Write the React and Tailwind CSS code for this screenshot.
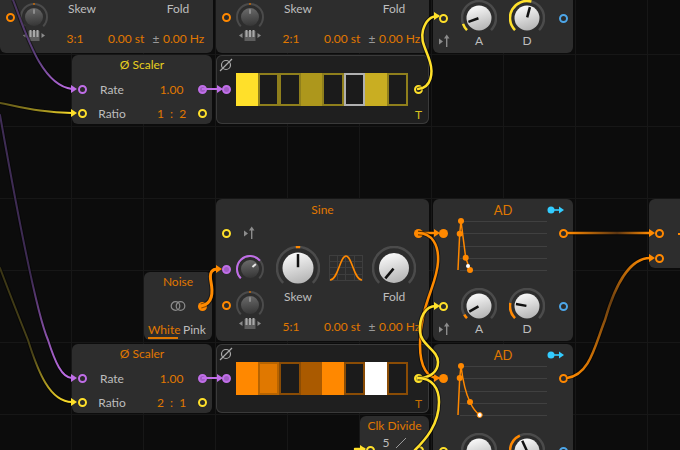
import React from 'react'

const PORTS = {
  orangeRing: 'border-2 border-[#ff8800] bg-[#2b2b2b]',
  orangeFull: 'bg-[#ff8800]',
  yellowRing: 'border-2 border-[#ffe02a] bg-[#2b2b2b]',
  yellowFull: 'border-2 border-[#ffe02a] bg-[#a09a30]',
  purple: 'border-2 border-[#c06ee8] bg-[#9f5ec2]',
  purpleRing: 'border-2 border-[#c06ee8] bg-[#2b2b2b]',
  blue: 'border-2 border-[#4da6e8] bg-[#2b2b2b]',
}

function Port({ kind }) {
  return <span className={'block w-[9px] h-[9px] rounded-full ' + PORTS[kind]} />
}

function polar(c, r, deg) {
  const a = ((deg - 90) * Math.PI) / 180
  return [c + r * Math.cos(a), c + r * Math.sin(a)]
}

function arc(c, r, from, to) {
  const [x1, y1] = polar(c, r, from)
  const [x2, y2] = polar(c, r, to)
  return `M${x1} ${y1} A${r} ${r} 0 ${to - from > 180 ? 1 : 0} 1 ${x2} ${y2}`
}

// angle 0 = straight up, range is -135..135
function Knob({ size, r, disc, angle, color, tick, dark, fill, width = 2.5 }) {
  const c = size / 2
  const [x1, y1] = polar(c, dark ? disc * 0.35 : disc * 0.05, angle)
  const [x2, y2] = polar(c, dark ? disc * 0.85 : disc * 0.9, angle)
  const t = dark ? 4 : 6
  return (
    <svg width={size} height={size} className="block shrink-0">
      <path d={arc(c, r, -135, 135)} fill="none" stroke="#4b4b4b" strokeWidth={width} />
      {color && <path d={arc(c, r, -135, angle)} fill="none" stroke={color} strokeWidth={width} />}
      {tick && <path d={arc(c, r, -t, t)} fill="none" stroke={dark ? '#b06414' : '#ff8800'} strokeWidth={width} />}
      <circle cx={c} cy={c} r={disc} fill={dark ? 'url(#discDark)' : 'url(#discLight)'} />
      <line x1={x1} y1={y1} x2={x2} y2={y2} stroke={fill || (dark ? '#8c8c8c' : '#111')} strokeWidth={dark ? 2 : 2.5} />
    </svg>
  )
}

function KeysIcon() {
  return (
    <svg width="22" height="11" className="block" fill="#8c8c8c">
      <polygon points="0,5.5 3.5,3 3.5,8" />
      <polygon points="22,5.5 18.5,3 18.5,8" />
      <rect x="5.5" y="1" width="11" height="10" fill="#5e5e5e" />
      <rect x="6.5" y="0" width="2" height="7" fill="#a8a8a8" />
      <rect x="10" y="0" width="2" height="7" fill="#a8a8a8" />
      <rect x="13.5" y="0" width="2" height="7" fill="#a8a8a8" />
    </svg>
  )
}

function TrigIcon() {
  return (
    <svg width="14" height="14" className="block" fill="#8c8c8c">
      <polygon points="1,4.5 5,7.5 1,10.5" />
      <rect x="8" y="3" width="1.4" height="10" />
      <polygon points="8.7,0.5 11.5,4.5 6,4.5" />
    </svg>
  )
}

function PhaseIcon() {
  return (
    <svg width="14" height="14" className="block" fill="none" stroke="#aaaaaa" strokeWidth="1.2">
      <circle cx="7" cy="7" r="4.5" />
      <line x1="1" y1="13" x2="13" y2="1" />
    </svg>
  )
}

function SineGraph() {
  return (
    <svg width="34" height="26" className="block" fill="none">
      <path d="M0.5 0.5H33.5M0.5 6.5H33.5M0.5 12.5H33.5M0.5 19.5H33.5M0.5 25.5H33.5M0.5 0V26M8.5 0V26M16.5 0V26M25.5 0V26M33.5 0V26" stroke="#3e3e3e" />
      <path d="M1 25 C9 25 11 1 17 1 C23 1 25 25 33 25" stroke="#ff8800" strokeWidth="1.6" />
    </svg>
  )
}

function Node({ x, y, w, h, children, className = 'bg-[#2d2d2d]' }) {
  return (
    <div
      className={'absolute rounded-[6px] text-[12px] leading-none text-[#bdbdbd] ' + className}
      style={{ left: x, top: y, width: w, height: h }}
    >
      {children}
    </div>
  )
}

function PortCell({ kind, height = 'h-9' }) {
  return (
    <div className={'flex items-center justify-center w-5 ' + height}>
      {kind && <Port kind={kind} />}
    </div>
  )
}

function Osc({ x, y, title, ratio, knob, out }) {
  return (
    <Node x={x} y={y} w={213} h={142}>
      <div className="h-4 pt-[5px] flex items-center justify-center text-[#e07800]">{title}</div>
      <div className="flex">
        <div className="w-5">
          <PortCell kind="yellowRing" />
          <PortCell kind="purple" />
          <PortCell kind="orangeRing" />
        </div>
        <div className="w-7 flex flex-col items-center">
          <div className="h-9 flex items-center"><TrigIcon /></div>
          <div className="h-9 flex items-center">{knob}</div>
          <div className="h-7 mt-1 flex items-center">
            <Knob size={28} r={13} disc={9} angle={0} dark tick width={2} />
          </div>
          <div className="-mt-px"><KeysIcon /></div>
        </div>
        <div className="pt-[14px]">
          <div className="h-[9px] ml-[150px]">{out && <Port kind={out} />}</div>
          <div className="flex items-center mt-2">
            <div className="ml-3"><Knob size={44} r={21} disc={15.5} angle={0} tick /></div>
            <div className="ml-[9px]"><SineGraph /></div>
            <div className="ml-[9px]"><Knob size={44} r={21} disc={15} angle={-140} /></div>
          </div>
          <div className="flex h-[14px] items-center">
            <div className="ml-3 w-11 text-center">Skew</div>
            <div className="ml-[52px] w-11 text-center">Fold</div>
          </div>
          <div className="flex items-center h-4 mt-[15px] text-[#e07800] whitespace-nowrap">
            <div className="ml-[18px] w-[18px] text-center">{ratio}</div>
            <div className="ml-[24px] w-[34px] text-center">0.00 st</div>
            <div className="ml-[10px] w-2 text-center text-[#9a9a9a]">±</div>
            <div className="ml-[3px]">0.00 Hz</div>
          </div>
        </div>
      </div>
    </Node>
  )
}

function EnvGraph({ line, points }) {
  return (
    <svg width="100" height="60" className="block" fill="none">
      <path d="M7 6.5H94M7 18.5H94M7 31.5H94M7 43.5H94M7 55.5H94" stroke="#404040" />
      <path d={line} stroke="#ff8800" strokeWidth="1.5" />
      {points.map((p, i) => (
        <circle key={i} cx={p[0]} cy={p[1]} r={p[2] || 3} fill={p[3] || '#ff8800'} stroke={p[4] || 'none'} />
      ))}
    </svg>
  )
}

function AD({ x, y, title, line, points, aKnob, dKnob, labels = true }) {
  return (
    <Node x={x} y={y} w={140} h={142}>
      <div className="h-4 pt-[7px] flex items-center justify-center text-[#e07800] text-[13px]">{title}</div>
      {title && (
        <svg width="18" height="10" className="absolute top-[6px] right-[8px]" fill="none">
          <circle cx="4" cy="5" r="3.5" fill="#33ccff" />
          <path d="M4 5H14" stroke="#33ccff" strokeWidth="1.6" />
          <polygon points="12,1.5 17,5 12,8.5" fill="#33ccff" />
        </svg>
      )}
      <div className="flex">
        <div className="w-5"><PortCell kind="orangeFull" /></div>
        <EnvGraph line={line} points={points} />
        <div className="w-5"><PortCell kind="orangeRing" /></div>
      </div>
      <div className="flex mt-[13px]">
        <PortCell kind="yellowRing" />
        <div className="ml-2">{aKnob}</div>
        <div className="ml-3">{dKnob}</div>
        <div className="ml-2"><PortCell kind="blue" /></div>
      </div>
      {labels && (
        <div className="flex h-[14px] items-center -mt-[2px]">
          <div className="ml-[5px]"><TrigIcon /></div>
          <div className="ml-[9px] w-9 text-center">A</div>
          <div className="ml-3 w-9 text-center">D</div>
        </div>
      )}
    </Node>
  )
}

function Scaler({ x, y, title, titleColor, ratio }) {
  return (
    <Node x={x} y={y} w={140} h={69}>
      <div className={'h-[22px] pb-[2px] flex items-center justify-center ' + titleColor}>{title}</div>
      <div className="flex items-center h-6">
        <PortCell kind="purpleRing" height="h-6" />
        <div className="w-10 pt-[2px] text-center">Rate</div>
        <div className="ml-[19px] w-[41px] pt-[2px] text-center text-[#e07800]">1.00</div>
        <PortCell kind="purple" height="h-6" />
      </div>
      <div className="flex items-center h-6">
        <PortCell kind="yellowRing" height="h-6" />
        <div className="w-10 pt-[2px] text-center">Ratio</div>
        <div className="ml-[19px] w-[41px] pt-[2px] text-center text-[#e07800] whitespace-pre">{ratio}</div>
        <PortCell kind="yellowRing" height="h-6" />
      </div>
    </Node>
  )
}

function Steps({ x, y, steps, out, tColor }) {
  return (
    <Node x={x} y={y} w={213} h={69} className="bg-[#1f1f1f] shadow-[inset_0_0_0_1px_#3a3a3a]">
      <div className="h-[18px] flex items-center pl-[3px] pt-[2px]"><PhaseIcon /></div>
      <div className="flex items-center h-[33px]">
        <PortCell kind="purple" height="h-[33px]" />
        <div className="flex w-[172px] h-[33px]">
          {steps.map((s, i) => (
            <div key={i} className={'flex-1 border-2 ' + s} />
          ))}
        </div>
        <PortCell kind={out} height="h-[33px]" />
      </div>
      <div className={'h-[16px] flex items-center justify-end pr-[7px] pt-[1px] ' + tColor}>T</div>
    </Node>
  )
}

function Wire({ d, from, to, a, b = a, fade, width = 2.5 }) {
  const id = 'w' + d.replace(/[^0-9]/g, '').slice(0, 14)
  return (
    <>
      <defs>
        <linearGradient id={id} gradientUnits="userSpaceOnUse" x1={from[0]} y1={from[1]} x2={to[0]} y2={to[1]}>
          <stop offset="0" stopColor={a} />
          <stop offset="0.6" stopColor={fade || a} />
          <stop offset="1" stopColor={b} />
        </linearGradient>
      </defs>
      <path d={d} fill="none" stroke="#000" strokeOpacity="0.45" strokeWidth={width + 2} />
      <path d={d} fill="none" stroke={`url(#${id})`} strokeWidth={width} strokeLinecap="round" />
    </>
  )
}

function Arrow({ x, y, color }) {
  return <polygon points={`${x - 6},${y - 4} ${x},${y} ${x - 6},${y + 4}`} fill={color} />
}

function Wires() {
  const P = '#c06ee8'
  const Y = '#ffe02a'
  const O = '#ff8a00'
  return (
    <svg width="680" height="450" className="absolute inset-0 z-10 pointer-events-none">
      <defs>
        <linearGradient id="discLight" x1="0.3" y1="0" x2="0.6" y2="1">
          <stop offset="0" stopColor="#fbfbfb" />
          <stop offset="1" stopColor="#b4b4b4" />
        </linearGradient>
        <linearGradient id="discDark" x1="0.4" y1="0" x2="0.5" y2="1">
          <stop offset="0" stopColor="#6a6a6a" />
          <stop offset="1" stopColor="#363636" />
        </linearGradient>
      </defs>

      <Wire d="M13 0 C25 30 40 85 72 89" from={[13, 0]} to={[72, 89]} a="#4a3560" b={P} fade="#5f4080" width={2} />
      <Arrow x={77} y={89} color={P} />
      <Wire d="M0 115 C15 200 35 310 48 340 C55 362 62 378 72 378" from={[0, 115]} to={[72, 378]} a="#3f2d55" b={P} fade="#3d2a52" width={2} />
      <Arrow x={77} y={378} color={P} />
      <Wire d="M0 103 C25 108 45 113 72 113" from={[0, 103]} to={[72, 113]} a="#5e5518" b={Y} fade="#a09020" width={2} />
      <Arrow x={77} y={113} color={Y} />
      <Wire d="M0 268 C12 300 22 325 28 340 C38 372 50 402 72 402" from={[0, 268]} to={[72, 402]} a="#3a3515" b={Y} fade="#4a4418" width={2} />
      <Arrow x={77} y={402} color={Y} />

      <path d="M202 89H220M202 378H220" stroke={P} strokeWidth="2" />
      <Arrow x={223} y={89} color={P} />
      <Arrow x={223} y={378} color={P} />

      <Wire d="M418 89 C432 88 433 72 430 62 C426 48 420 42 423 30 C426 20 432 16 438 16" from={[418, 89]} to={[438, 16]} a={Y} />
      <Arrow x={440} y={16} color={Y} />

      <Wire d="M201 306 C213 304 213 292 211 282 C209 272 212 269 218 269" from={[201, 306]} to={[218, 269]} a={O} width={3} />
      <Arrow x={222} y={269} color={O} />

      <Wire d="M418 233 H436" from={[418, 233]} to={[436, 233]} a={O} />
      <Arrow x={440} y={233} color={O} />
      <Wire d="M418 233 C432 233 439 245 438 262 C437 285 420 305 420 345 C420 368 428 378 438 378" from={[418, 233]} to={[438, 378]} a={O} />
      <Arrow x={440} y={378} color={O} />

      <Wire d="M436 306 C425 306 419 318 420 332 C421 345 438 350 438 362 C438 372 430 378 418 378" from={[436, 306]} to={[418, 378]} a={Y} />
      <Arrow x={440} y={306} color={Y} />
      <Wire d="M418 378 C432 378 439 388 439 402 C439 425 425 440 415 450" from={[418, 378]} to={[415, 450]} a={Y} />
      <Wire d="M355 449 H364" from={[355, 449]} to={[364, 449]} a={Y} />
      <Arrow x={366} y={449} color={Y} />

      <Wire d="M568 233 H650" from={[568, 233]} to={[650, 233]} a={O} fade="#5c3612" b={O} />
      <Arrow x={655} y={233} color={O} />
      <Wire d="M567 378 C590 375 595 345 605 320 C615 285 630 258 650 258" from={[567, 378]} to={[650, 258]} a={O} fade="#6c4010" />
      <Arrow x={655} y={258} color={O} />
    </svg>
  )
}

const Y_ON = 'bg-[#ffe02a] border-[#ffe02a]'
const Y_OFF = 'bg-[#1b1b1b] border-[#8f7f1c]'
const Y_CUR = 'bg-[#1b1b1b] border-[#b0b0b0]'
const O_OFF = 'bg-[#1b1b1b] border-[#8a4c05]'

export default function App() {
  const ad = { size: 36, r: 17, disc: 12.5 }
  return (
    <div className="relative w-[680px] h-[450px] overflow-hidden bg-[#0c0c0c] font-['Lato',sans-serif] bg-[linear-gradient(to_right,#171717_1px,transparent_1px),linear-gradient(to_bottom,#171717_1px,transparent_1px)] bg-[size:72px_72px] bg-[position:71px_54px]">
      <Osc x={0} y={-89} ratio="3:1" />
      <Osc x={216} y={-89} ratio="2:1" />
      <Osc
        x={216}
        y={199}
        title="Sine"
        ratio="5:1"
        out="orangeFull"
        knob={<Knob size={28} r={13} disc={9} angle={50} dark color="#c06ee8" fill="#e8e8e8" width={2} />}
      />

      <AD
        x={433}
        y={-89}
        line=""
        points={[]}
        aKnob={<Knob {...ad} angle={-110} color="#ffe02a" />}
        dKnob={<Knob {...ad} angle={15} color="#ffe02a" />}
      />
      <AD
        x={433}
        y={199}
        title="AD"
        line="M5 55 L6.7 18.7 L8 6 L12.7 42.7 L17 55"
        points={[[8, 6], [6.7, 18.7], [12.7, 42.7], [17, 55], [15, 51, 2, '#ffffff']]}
        aKnob={<Knob {...ad} angle={-120} color="#ff8800" />}
        dKnob={<Knob {...ad} angle={-80} color="#ff8800" />}
      />
      <AD
        x={433}
        y={344}
        title="AD"
        labels={false}
        line="M5 55 L6.7 18 L8 6 Q11 30 17 42 Q21 51 26.7 55"
        points={[[8, 6], [6.7, 18], [17, 42], [26.7, 55, 2.5, '#ffffff', '#ff8800']]}
        aKnob={<Knob {...ad} angle={-135} />}
        dKnob={<Knob {...ad} angle={-25} color="#ff8800" />}
      />

      <Scaler x={72} y={55} title="Ø Scaler" titleColor="text-[#e8d020]" ratio="1  :  2" />
      <Scaler x={72} y={344} title="Ø Scaler" titleColor="text-[#e07800]" ratio="2  :  1" />

      <Steps
        x={216}
        y={55}
        out="yellowRing"
        tColor="text-[#d8c020]"
        steps={[Y_ON, Y_OFF, Y_OFF, 'bg-[#ad971c] border-[#ad971c]', Y_OFF, Y_CUR, 'bg-[#c9ae22] border-[#c9ae22]', Y_OFF]}
      />
      <Steps
        x={216}
        y={344}
        out="yellowFull"
        tColor="text-[#c87000]"
        steps={[
          'bg-[#ff8800] border-[#ff8800]',
          'bg-[#e07800] border-[#b86400]',
          O_OFF,
          'bg-[#aa5a00] border-[#aa5a00]',
          'bg-[#ff8800] border-[#ff8800]',
          O_OFF,
          'bg-[#ffffff] border-[#ffffff]',
          O_OFF,
        ]}
      />

      <Node x={144} y={272} w={68} h={68}>
        <div className="h-5 flex items-center justify-center text-[#e07800]">Noise</div>
        <div className="grid grid-cols-[20px_28px_20px] h-7 items-center justify-items-center">
          <span />
          <svg width="16" height="10" fill="none" stroke="#8c8c8c" strokeWidth="1.2" className="block">
            <circle cx="5.5" cy="5" r="4.3" />
            <circle cx="10.5" cy="5" r="4.3" />
          </svg>
          <Port kind="orangeFull" />
        </div>
        <div className="flex items-start pl-1 pt-[2px] h-5 whitespace-nowrap">
          <div className="w-[30px] h-[17px] pt-[2px] text-center text-[#e07800] border-b-2 border-[#e07800]">White</div>
          <div className="ml-[5px] pt-[2px]">Pink</div>
        </div>
      </Node>

      <Node x={360} y={416} w={69} h={60}>
        <div className="h-5 flex items-center justify-center text-[#e07800]">Clk Divide</div>
        <div className="flex items-center h-[14px]">
          <div className="ml-[22px] w-2 text-center">5</div>
          <svg width="12" height="12" className="block ml-[5px]"><line x1="1" y1="11" x2="11" y2="1" stroke="#9a9a9a" /></svg>
        </div>
        <div className="flex justify-between -mt-[5px]">
          <PortCell kind="yellowRing" height="h-[10px]" />
          <PortCell kind="yellowRing" height="h-[10px]" />
        </div>
      </Node>

      <Node x={649} y={199} w={60} h={69}>
        <div className="h-[22px]" />
        <PortCell kind="orangeRing" height="h-6" />
        <PortCell kind="orangeRing" height="h-[26px]" />
      </Node>
      <div className="absolute left-[678px] top-[233px] w-[2px] h-[2px] bg-[#ff8800]" />

      <Wires />
    </div>
  )
}
